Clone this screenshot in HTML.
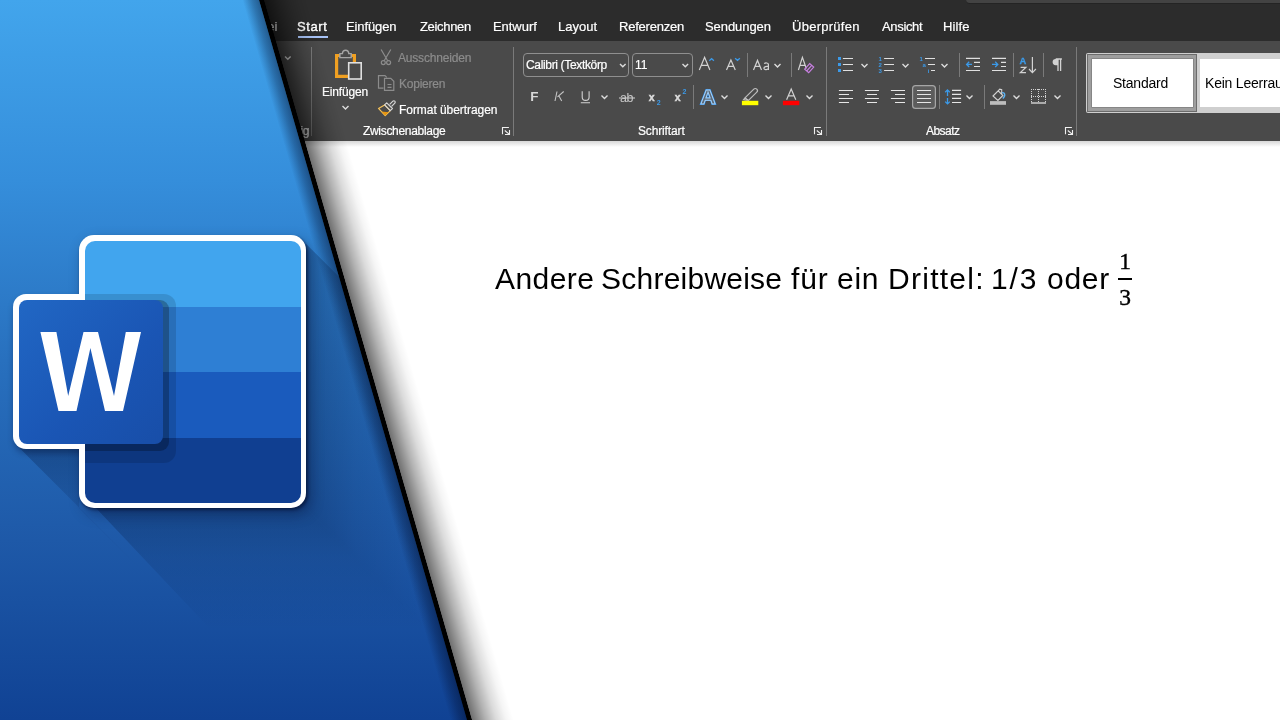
<!DOCTYPE html>
<html><head><meta charset="utf-8">
<style>
*{margin:0;padding:0;box-sizing:border-box}
html,body{width:1280px;height:720px;overflow:hidden;background:#fff}
body{position:relative;font-family:"Liberation Sans",sans-serif}
.abs{position:absolute}
#root{position:absolute;left:0;top:0;width:1280px;height:720px;overflow:hidden}
.t,.r,.dw,.abs{will-change:transform}
.t,.r{-webkit-text-stroke:.2px currentColor}
#tabbar{position:absolute;left:0;top:0;width:1280px;height:41px;background:#2c2c2c}
#ribbon{position:absolute;left:0;top:41px;width:1280px;height:100px;background:#4a4a4a}
#rshadow{position:absolute;left:0;top:141px;width:1280px;height:6px;background:linear-gradient(#d8d8d8,#fff)}
.t{position:absolute;color:#fff;font-size:13px;line-height:16px;white-space:nowrap;transform-origin:0 0}
.r{position:absolute;color:#fff;font-size:12px;line-height:14px;white-space:nowrap;transform-origin:0 0}
.dis{color:#8c8c8c}
.sep{position:absolute;width:1px;background:#7a7a7a}
.dw{position:absolute;top:258.6px;font-size:30px;line-height:40px;color:#000;white-space:nowrap;transform-origin:0 0}
#panel{position:absolute;left:0;top:0;width:1280px;height:720px;
 clip-path:polygon(0 0,261px 0,469px 720px,0 720px);
 background:linear-gradient(#42a5ec 0%,#358edb 25%,#2870be 50%,#1e59a8 75%,#104294 100%)}
.ls{position:absolute;left:0;top:0;width:1280px;height:720px}
#edge{position:absolute;left:259.1px;top:0;width:0;height:0;transform:rotate(-16.11deg);transform-origin:0 0}
#logo{position:absolute;left:0;top:0;width:0;height:0}
</style></head><body><div id="root">
<div id="tabbar"></div>
<div id="ribbon"></div>
<div class="abs" style="left:966px;top:-4px;width:330px;height:7.5px;background:#434343;border-radius:4px;border-bottom:1px solid #242424"></div>
<div id="rshadow"></div>

<div class="t" style="left:296.6px;top:18.9px;letter-spacing:0.6px;-webkit-text-stroke:.35px #fff">Start</div>
<div class="abs" style="left:298px;top:36px;width:30px;height:2px;background:#a7c2f5"></div>
<div class="t" style="left:346.3px;top:18.9px;letter-spacing:-0.114px">Einfügen</div>
<div class="t" style="left:419.9px;top:18.9px;letter-spacing:-0.329px">Zeichnen</div>
<div class="t" style="left:493.2px;top:18.9px;letter-spacing:-0.05px">Entwurf</div>
<div class="t" style="left:558.2px;top:18.9px;letter-spacing:0px">Layout</div>
<div class="t" style="left:618.5px;top:18.9px;letter-spacing:-0.222px">Referenzen</div>
<div class="t" style="left:705px;top:18.9px;letter-spacing:-0.062px">Sendungen</div>
<div class="t" style="left:792.4px;top:18.9px;letter-spacing:0.267px">Überprüfen</div>
<div class="t" style="left:882.2px;top:18.9px;letter-spacing:-0.333px">Ansicht</div>
<div class="t" style="left:943.1px;top:18.9px;letter-spacing:0.1px">Hilfe</div>


<!-- ribbon texts -->
<div class="t" style="left:246.8px;top:18.9px">Datei</div>
<div class="r" style="left:322px;top:84.5px;letter-spacing:-0.176px">Einfügen</div>
<div class="r dis" style="left:398px;top:51px;letter-spacing:-0.188px">Ausschneiden</div>
<div class="r dis" style="left:398.5px;top:76.5px;letter-spacing:-0.240px">Kopieren</div>
<div class="r" style="left:398.5px;top:102.5px;letter-spacing:-0.058px">Format übertragen</div>
<div class="r" style="left:363px;top:123.5px;letter-spacing:-0.311px">Zwischenablage</div>
<div class="r" style="left:249px;top:123.5px;letter-spacing:-0.315px">Rückgängig</div>
<div class="r" style="left:638px;top:123.5px;letter-spacing:-0.144px">Schriftart</div>
<div class="r" style="left:926px;top:123.5px;letter-spacing:-0.555px">Absatz</div>
<div class="abs" style="left:522.5px;top:53px;width:106px;height:24px;border:1px solid #8f8f8f;border-radius:4px"></div>
<div class="abs" style="left:631.5px;top:53px;width:60.5px;height:24px;border:1px solid #8f8f8f;border-radius:4px"></div>
<div class="r" style="left:525.5px;top:58px;width:97px;overflow:hidden;letter-spacing:-0.342px">Calibri (Textkörp</div>
<div class="r" style="left:634.5px;top:58px">11</div>
<!-- styles gallery -->
<div class="abs" style="left:1086px;top:53px;width:220px;height:60px;background:#cfcfcf;border-radius:2px"></div>
<div class="abs" style="left:1087px;top:54px;width:110px;height:58px;background:#9e9e9e;box-shadow:inset 0 0 0 1px #6c6c6c"></div>
<div class="abs" style="left:1092px;top:59px;width:100.5px;height:48px;background:#fff;box-shadow:0 0 0 .6px #777"></div>
<div class="abs" style="left:1200px;top:59px;width:90px;height:48px;background:#fff"></div>
<div class="abs" style="left:1113px;top:75px;font-family:'Liberation Sans',sans-serif;font-size:14px;line-height:16px;color:#000;transform-origin:0 0;letter-spacing:-0.214px">Standard</div>
<div class="abs" style="left:1204.5px;top:75px;font-family:'Liberation Sans',sans-serif;font-size:14px;line-height:16px;color:#000;white-space:nowrap;transform-origin:0 0;letter-spacing:-0.212px">Kein Leerraum</div>
<!-- separators -->
<div class="sep" style="left:311px;top:47px;height:89px"></div>
<div class="sep" style="left:513px;top:47px;height:89px"></div>
<div class="sep" style="left:825.5px;top:47px;height:89px"></div>
<div class="sep" style="left:1076px;top:47px;height:89px"></div>
<div class="sep" style="left:746.5px;top:53px;height:24px"></div>
<div class="sep" style="left:791px;top:53px;height:24px"></div>
<div class="sep" style="left:693px;top:85px;height:24px"></div>
<div class="sep" style="left:958.5px;top:53px;height:24px"></div>
<div class="sep" style="left:1013px;top:53px;height:24px"></div>
<div class="sep" style="left:1042.5px;top:53px;height:24px"></div>
<div class="sep" style="left:938.5px;top:85px;height:24px"></div>
<div class="sep" style="left:983.5px;top:85px;height:24px"></div>
<svg class="abs" style="left:0;top:0" width="1280" height="145" viewBox="0 0 1280 145" fill="none" stroke-linecap="butt">
 <g id="chev" stroke="#dcdcdc" stroke-width="1.4">
  <path d="M285 56.5l2.8 2.8 2.8-2.8"/>
  <path d="M342.5 106l3 3 3-3"/>
  <path d="M620 64l2.8 2.8 2.8-2.8"/>
  <path d="M682.5 64l2.8 2.8 2.8-2.8"/>
  <path d="M774.5 64l3 3 3-3"/>
  <path d="M601.5 95.5l3 3 3-3"/>
  <path d="M721.5 95.5l3 3 3-3"/>
  <path d="M765.5 95.5l3 3 3-3"/>
  <path d="M806.5 95.5l3 3 3-3"/>
  <path d="M861.5 64l3 3 3-3"/>
  <path d="M902.5 64l3 3 3-3"/>
  <path d="M941.5 64l3 3 3-3"/>
  <path d="M966.5 95.5l3 3 3-3"/>
  <path d="M1013.5 95.5l3 3 3-3"/>
  <path d="M1054.5 95.5l3 3 3-3"/>
 </g>
 <!-- clipboard -->
 <path d="M336.6 57.3V76.3h10.4M336.6 55.5h2.6M352 55.5h2.4v5.5" stroke="#f0a022" stroke-width="3.2" stroke-linecap="square"/>
 <path d="M339.9 57.6v-4h2.5c.2-2.2 1.5-3.4 3.2-3.4s3 1.2 3.2 3.4h2.4v4z" stroke="#a6a6a6" stroke-width="1.4" fill="#4a4a4a"/>
 <rect x="348.7" y="62.8" width="12.5" height="16.2" stroke="#e0e0e0" stroke-width="1.6" fill="#4a4a4a"/>
 <!-- scissors -->
 <g stroke="#8c8c8c" stroke-width="1.2">
  <circle cx="383.3" cy="62.6" r="2"/><circle cx="388.6" cy="62.6" r="2"/>
  <path d="M384.2 60.8L390.8 49.5M387.7 60.8L381.1 49.5"/>
 </g>
 <!-- copy -->
 <g stroke="#8c8c8c" stroke-width="1.2">
  <path d="M383.5 88.2h-5v-12.6h6.5l1.8 1.8"/>
  <path d="M384.5 78.3h6.3l3 3v9h-9.3z"/>
  <path d="M387.5 84.5h4M387.5 87.3h4"/>
 </g>
 <!-- brush -->
 <path d="M384.6 104.9L378.5 108.4 385.2 115.6 390.3 110.6z" stroke="#f7c35a" stroke-width="1.2" stroke-linejoin="round"/>
 <path d="M381.5 111.6L385.2 115.6 388.6 112.3z" fill="#e8960f"/>
 <path d="M392.4 108.5L390.3 110.6 384.6 104.9 386.7 102.8zM389.7 104.4l3.2-3.2a1.3 1.3 0 0 1 1.9 1.9l-3.2 3.2" stroke="#d6d6d6" stroke-width="1.2" stroke-linejoin="round"/>
 <!-- font row1 -->
 <g stroke="#d2d2d2" stroke-width="1.2" stroke-linejoin="miter">
  <path d="M699.3 70L704.6 57.3 709.9 70M701.3 65.3h6.6"/>
  <path d="M726.5 70L730.9 60 735.3 70M728.2 66.3h5.4"/>
  <path d="M753.5 70L757.5 60.4 761.5 70M755.1 66.4h4.8"/>
  <path d="M798.4 70L802.4 57.3 806.3 68.5M800.2 65.4h4.6"/>
 </g>
 <path d="M764.2 63.6c1-.9 4-1 4.2.8V70M768.4 66.5c-1.5-.3-4.4-.1-4.5 1.6c-.1 1.8 3.1 2 4.5.6" stroke="#d2d2d2" stroke-width="1.2"/>
 <path d="M709.3 60.8l2.3-2.2 2.3 2.2M735.1 58.3l2.4 2 2.4-2" stroke="#3b9ae9" stroke-width="1.3"/>
 <path d="M804.7 69.1l5-5.6 4 3.6-5 5.6zM806.7 71l5-5.6" stroke="#c77fe0" stroke-width="1.2"/>
 <!-- font row2 -->
 <text x="530.3" y="101.2" font-family="Liberation Sans" font-weight="bold" font-size="13.5" fill="#d8d8d8">F</text>
 <path d="M557 91.5l-2 9.5M563.7 91.5l-6.2 5.3M558.7 95.6l3 5.4" stroke="#c4c4c4" stroke-width="1.1"/>
 <path d="M582.2 91.3v5.6c0 4.6 6.9 4.6 6.9 0v-5.6M580.8 102.7h9.2" stroke="#d2d2d2" stroke-width="1.1"/>
 <text x="620" y="102" font-family="Liberation Sans" font-size="12.5" fill="#c8c8c8" textLength="13.5">ab</text>
 <path d="M619 98h16" stroke="#c8c8c8" stroke-width="1.1"/>
 <text x="648.8" y="101.4" font-family="Liberation Sans" font-weight="bold" font-size="10.5" fill="#dcdcdc" stroke="#dcdcdc" stroke-width=".45">x</text>
 <text x="656.8" y="105.4" font-family="Liberation Sans" font-weight="bold" font-size="7" fill="#3b9ae9">2</text>
 <text x="674.8" y="101.4" font-family="Liberation Sans" font-weight="bold" font-size="10.5" fill="#dcdcdc" stroke="#dcdcdc" stroke-width=".45">x</text>
 <text x="682.6" y="94.2" font-family="Liberation Sans" font-weight="bold" font-size="7" fill="#3b9ae9">2</text>
 <text x="700.3" y="103.8" font-family="Liberation Sans" font-weight="bold" font-size="20.5" fill="#5a6878" stroke="#2080e0" stroke-width="1.8" paint-order="stroke" textLength="15.6" lengthAdjust="spacingAndGlyphs">A</text>
 <text x="700.3" y="103.8" font-family="Liberation Sans" font-weight="bold" font-size="20.5" fill="none" stroke="#a8d4fa" stroke-width=".9" textLength="15.6" lengthAdjust="spacingAndGlyphs">A</text>
 <path d="M745.2 97.7l8.6-8.6c.8-.8 2.2-.8 3 0c.8.8.8 2.2 0 3l-8.6 8.6zM745.2 97.7l-1.6 1.9 2.4.6 2.2-.6" stroke="#bdbdbd" stroke-width="1.2"/>
 <rect x="741.9" y="100.8" width="16.4" height="4.4" fill="#ffff00"/>
 <path d="M786.6 99.8L791.2 89.1 795.8 99.8M788.3 95.9h5.8" stroke="#d2d2d2" stroke-width="1.2"/>
 <rect x="782.9" y="100.8" width="16.4" height="4.4" fill="#ff0000"/>
 <!-- paragraph row1 -->
 <g fill="#3b9ae9">
  <rect x="838" y="57" width="3" height="3"/><rect x="838" y="63" width="3" height="3"/><rect x="838" y="69" width="3" height="3"/>
 </g>
 <g stroke="#e0e0e0" stroke-width="1.1">
  <path d="M842.9 58.5h10.1M842.9 64.5h10.1M842.9 70.5h10.1"/>
  <path d="M884.1 58.5h9.9M884.1 64.5h9.9M884.1 70.5h9.9"/>
  <path d="M925 58.5h10M928 64.5h7M931 70.5h4"/>
  <path d="M966 58.4h14M974 62.4h6M974 66.5h6M966 70.5h14"/>
  <path d="M992 58.4h14M1001 62.4h5M1001 66.5h5M992 70.5h14"/>
 </g>
 <g font-family="Liberation Sans" font-weight="bold" font-size="6" fill="#3b9ae9">
  <text x="878.6" y="61">1</text><text x="878.6" y="67.1">2</text><text x="878.6" y="73.1">3</text>
  <text x="919.6" y="61">1</text><text x="922.6" y="67.1">a</text><text x="927.8" y="73.1">i</text>
 </g>
 <path d="M972 64.4h-5.5M969.2 61.8l-2.6 2.6 2.6 2.6M992 64.4h5.5M995.2 61.8l2.6 2.6-2.6 2.6" stroke="#3b9ae9" stroke-width="1.3"/>
 <text x="1019.6" y="63.8" font-family="Liberation Sans" font-weight="bold" font-size="9.4" fill="#3b9ae9" stroke="#3b9ae9" stroke-width=".3">A</text>
 <path d="M1020.6 67.4h5.2l-5.4 5.2h5.6" stroke="#d2d2d2" stroke-width="1.3"/>
 <path d="M1032.4 57.1v15.6M1029 69l3.4 3.6 3.5-3.6" stroke="#d2d2d2" stroke-width="1.2"/>
 <path d="M1055.7 59h6.2M1058 59v12.1M1060.6 59v12.1" stroke="#d2d2d2" stroke-width="1.3"/>
 <path d="M1058 59h-2.3a3.1 3.1 0 0 0 0 6.2h2.3z" fill="#d2d2d2"/>
 <!-- paragraph row2 -->
 <rect x="912.6" y="85.6" width="22.8" height="22.8" rx="3" fill="#5c5c5c" stroke="#a6a6a6" stroke-width="1.2"/>
 <g stroke="#e6e6e6" stroke-width="1.2">
  <path d="M838.9 90.5h14.1M838.9 94.5h10.1M838.9 98.5h14.1M838.9 102.5h10.1"/>
  <path d="M864.9 90.5h14M867 94.5h10M864.9 98.5h14M867 102.5h10"/>
  <path d="M890.9 90.5h14.1M895 94.5h10M890.9 98.5h14.1M895 102.5h10"/>
  <path d="M917 90.5h14M917 94.5h14M917 98.5h14M917 102.5h14"/>
  <path d="M952 90.4h9.1M952 94.4h9.1M952 98.4h9.1M952 102.5h9.1"/>
 </g>
 <path d="M947.5 90v6M945.2 92.2l2.3-2.3 2.3 2.3M947.5 98v6M945.2 101.6l2.3 2.3 2.3-2.3" stroke="#3b9ae9" stroke-width="1.3"/>
 <path d="M993 96l5.2-5.2l4.7 4.7-5 5zM998.2 90.8l1.5-1.6 2 .5v4" stroke="#d2d2d2" stroke-width="1.1"/>
 <path d="M1002.8 98.5c1.4-1.2 2.2-3 1.8-4.6c-.4-1-1.6-1.4-2.5-1" stroke="#5db3f3" stroke-width="1.4"/>
 <rect x="990" y="101.1" width="16" height="3.7" fill="#bdbdbd"/>
 <path d="M1031 89h1v1h-1zM1031 91h1v1h-1zM1031 93h1v1h-1zM1031 95h1v1h-1zM1031 96h1v1h-1zM1031 97h1v1h-1zM1031 99h1v1h-1zM1031 101h1v1h-1zM1033 89h1v1h-1zM1033 96h1v1h-1zM1035 89h1v1h-1zM1035 96h1v1h-1zM1037 89h1v1h-1zM1037 96h1v1h-1zM1038 89h1v1h-1zM1038 91h1v1h-1zM1038 93h1v1h-1zM1038 95h1v1h-1zM1038 97h1v1h-1zM1038 99h1v1h-1zM1038 101h1v1h-1zM1039 89h1v1h-1zM1039 96h1v1h-1zM1041 89h1v1h-1zM1041 96h1v1h-1zM1043 89h1v1h-1zM1043 96h1v1h-1zM1045 89h1v1h-1zM1045 91h1v1h-1zM1045 93h1v1h-1zM1045 95h1v1h-1zM1045 96h1v1h-1zM1045 97h1v1h-1zM1045 99h1v1h-1zM1045 101h1v1h-1z" fill="#d2d2d2"/>
 <path d="M1031 103h15" stroke="#e0e0e0" stroke-width="1.3"/>
 <!-- launchers -->
 <g stroke="#f0f0f0" stroke-width="1.1">
  <path d="M502.5 134.2V127.5h6.4M504.8 130.5l4.3 3.6M509.5 130v4.5h-4.5"/>
  <path d="M814.5 134.2V127.5h6.4M816.8 130.5l4.3 3.6M821.5 130v4.5h-4.5"/>
  <path d="M1065.5 134.2V127.5h6.4M1067.8 130.5l4.3 3.6M1072.5 130v4.5h-4.5"/>
 </g>
</svg>

<div class="dw" style="left:494.7px;letter-spacing:0.436px">Andere</div>
<div class="dw" style="left:600.8px;letter-spacing:0.237px">Schreibweise</div>
<div class="dw" style="left:790.8px;letter-spacing:0.817px">für</div>
<div class="dw" style="left:837.3px;letter-spacing:0.760px">ein</div>
<div class="dw" style="left:888.0px;letter-spacing:1.272px">Drittel:</div>
<div class="dw" style="left:991.2px;letter-spacing:1.820px">1/3</div>
<div class="dw" style="left:1046.8px;letter-spacing:0.750px">oder</div>
<div class="abs" style="left:1112px;top:248.6px;width:26px;text-align:center;font-family:'Liberation Serif',serif;font-size:23.5px;line-height:24px;color:#000;-webkit-text-stroke:.4px #000">1</div>
<div class="abs" style="left:1118px;top:277.5px;width:14px;height:1.6px;background:#000"></div>
<div class="abs" style="left:1112px;top:284.9px;width:26px;text-align:center;font-family:'Liberation Serif',serif;font-size:23.5px;line-height:24px;color:#000;-webkit-text-stroke:.4px #000">3</div>

<div id="panel">
 <div class="ls" style="clip-path:polygon(16.8px 445.2px,79px 445px,79px 508px,379px 808px,316.8px 745.2px);background:linear-gradient(rgba(0,15,50,0.280) 449px,rgba(0,15,50,0.126) 498px,rgba(0,15,50,0.000) 571px)"></div>
<div class="ls" style="clip-path:polygon(79px 490px,306px 490px,306px 508px,606px 808px,379px 808px);background:linear-gradient(rgba(0,15,50,0.280) 508px,rgba(0,15,50,0.126) 557px,rgba(0,15,50,0.000) 630px)"></div>
<div class="ls" style="clip-path:polygon(301.6px 239.4px,306px 243.8px,306px 508px,606px 808px,606px 543.8px);background:linear-gradient(90deg,rgba(0,15,50,0.280) 306px,rgba(0,15,50,0.126) 355px,rgba(0,15,50,0.000) 428px)"></div>
 <div id="bluedark"></div>
</div>
<div id="edge">
 <div style="position:absolute;left:-16px;top:-80px;width:16px;height:900px;background:linear-gradient(90deg,rgba(0,10,40,0),rgba(0,10,40,.12) 25%,rgba(0,10,40,.3) 60%,rgba(0,10,40,.46))"></div>
 <div style="position:absolute;left:0;top:-80px;width:5.3px;height:900px;background:#000"></div>
 <div style="position:absolute;left:5.3px;top:-80px;width:40px;height:900px;background:linear-gradient(90deg,rgba(0,0,0,.56),rgba(0,0,0,.45) 14%,rgba(0,0,0,.3) 33%,rgba(0,0,0,.14) 58%,rgba(0,0,0,.04) 82%,rgba(0,0,0,0))"></div>
</div>
<div id="logo">
  <div class="abs" style="left:13px;top:294px;width:160px;height:155px;border-radius:13px;box-shadow:1px 4px 6px rgba(0,10,40,.35)"></div>
 <div class="abs" style="left:79px;top:235px;width:227px;height:273px;border-radius:15px;background:#fff;box-shadow:1.5px 2px 3px rgba(0,10,40,.55),4px 6px 14px rgba(0,10,40,.35)"></div>
 <div class="abs" style="left:13px;top:294px;width:160px;height:155px;border-radius:13px;background:#fff"></div>
 <div class="abs" style="left:84.5px;top:240.5px;width:216px;height:262px;border-radius:10px;overflow:hidden">
  <div class="abs" style="left:0;top:0;width:216px;height:65.5px;background:#41a5ee"></div>
  <div class="abs" style="left:0;top:65.5px;width:216px;height:65.5px;background:#2e7fd4"></div>
  <div class="abs" style="left:0;top:131px;width:216px;height:65.5px;background:#1a5bbd"></div>
  <div class="abs" style="left:0;top:196.5px;width:216px;height:66px;background:#103f91"></div>
  <div class="abs" style="left:-100px;top:52.5px;width:191px;height:169px;border-radius:12px;background:rgba(0,0,0,.13)"></div>
  <div class="abs" style="left:-100px;top:58.5px;width:184px;height:151px;border-radius:9px;background:rgba(0,0,0,.25)"></div>
 </div>
 <div class="abs" style="left:19px;top:299.5px;width:144px;height:144px;border-radius:8px;background:linear-gradient(135deg,#2167c4,#1a55b4 60%,#184ea8)"></div>
 <svg class="abs" style="left:0;top:0" width="200" height="460" viewBox="0 0 200 460">
  <polygon fill="#fff" points="40.4,332 56.4,332 68.2,396 83.5,332 98,332 114,396 125.8,332 141,332 123,411 105,411 90.4,348 76.5,411 58.5,411"/>
 </svg>
</div>
</div></body></html>
